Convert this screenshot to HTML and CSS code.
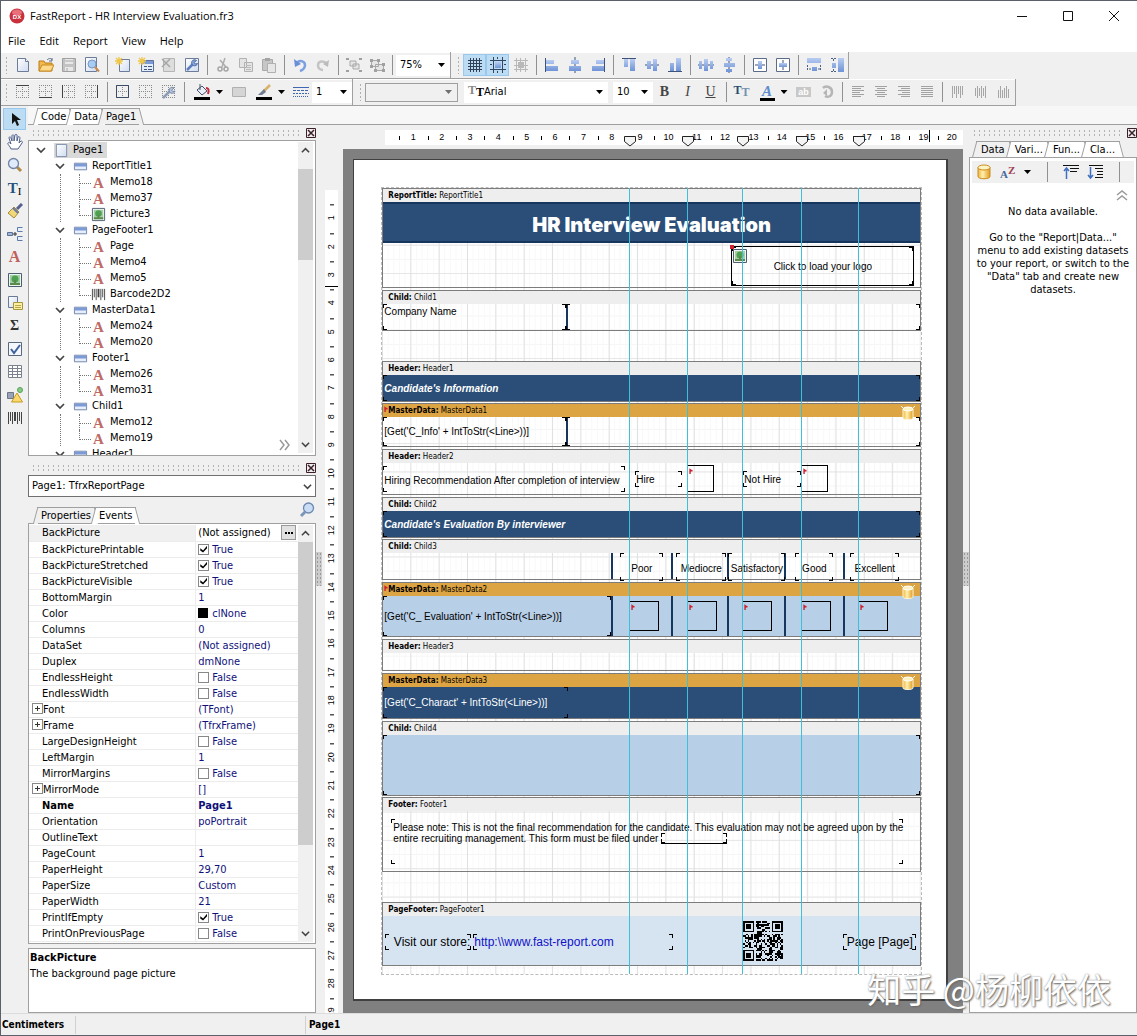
FILE: index.html
```html
<!DOCTYPE html>
<html lang="en">
<head>
  <meta charset="UTF-8">
  <meta name="viewport" content="width=device-width, initial-scale=1.0">
  <title>FastReport - HR Interview Evaluation.fr3</title>
  <link rel="stylesheet" href="styles.css">
</head>
<body>
  <!-- Icon set -->
  <svg class="sprite" aria-hidden="true">
    <defs>
      <linearGradient id="g-blue" x1="0" y1="0" x2="0" y2="1"><stop offset="0" stop-color="#b9cdf2"/><stop offset="1" stop-color="#6f93d6"/></linearGradient>
      <linearGradient id="g-paper" x1="0" y1="0" x2="1" y2="1"><stop offset="0" stop-color="#fff"/><stop offset="1" stop-color="#cfdcf0"/></linearGradient>
      <linearGradient id="g-gold" x1="0" y1="0" x2="1" y2="0"><stop offset="0" stop-color="#f0b63c"/><stop offset=".4" stop-color="#fff0b0"/><stop offset="1" stop-color="#e09a20"/></linearGradient>
    </defs>
    <symbol id="i-new" viewBox="0 0 16 16"><path d="M2.500 1.500h8l3 3v10h-11z" fill="url(#g-paper)" stroke="#6d7c99"/><path d="M10.500 1.500v3h3" fill="#fff" stroke="#6d7c99"/></symbol>
    <symbol id="i-open" viewBox="0 0 16 16"><path d="M1 14V4h5l1 2h7v8z" fill="#f3b94d" stroke="#b97a16"/><path d="M1 14l3-6h12l-3 6z" fill="#ffd98a" stroke="#c58a20"/><path d="M9 3c2-2 4-2 5 0m0-2v3h-3" fill="none" stroke="#5a6b8c"/></symbol>
    <symbol id="i-save" viewBox="0 0 16 16"><path d="M1.500 1.500h13v13h-13z" fill="#c3c3c3" stroke="#a0a0a0"/><path d="M4 2h8v5H4zM4 10h8v4H4z" fill="#e8e8e8"/><path d="M4 4h8M6 11v3" stroke="#a8a8a8"/></symbol>
    <symbol id="i-preview" viewBox="0 0 16 16"><path d="M1.500.5h11v14h-11z" fill="url(#g-paper)" stroke="#6d7c99"/><circle cx="8" cy="7" r="4" fill="#a9cdf2" stroke="#7898c4"/><path d="M11 10l4 4.500" stroke="#c98a4a" stroke-width="2"/></symbol>
    <symbol id="i-newpage" viewBox="0 0 16 16"><path d="M4.500 2.500h10v12h-10z" fill="url(#g-paper)" stroke="#6d7c99"/><path d="M4 0v8M0 4h8M1 1l6 6M7 1L1 7" stroke="#efc648" stroke-width="1.300"/></symbol>
    <symbol id="i-newdlg" viewBox="0 0 16 16"><path d="M3.500 3.500h12v11h-12z" fill="#e4edfa" stroke="#5d7199"/><path d="M4 4h11v3H4z" fill="#7b9bd8"/><path d="M6 9.500h3M6 12.500h3M10 9.500h4M10 12.500h4" stroke="#44567a"/><path d="M4 0v8M0 4h8M1 1l6 6M7 1L1 7" stroke="#efc648" stroke-width="1.300"/></symbol>
    <symbol id="i-delpage" viewBox="0 0 16 16"><path d="M2.500 1.500h11v13h-11z" fill="#ddd" stroke="#b4b4b4"/><path d="M1 2l8 8M9 2l-8 8" stroke="#a6a6a6" stroke-width="1.500"/></symbol>
    <symbol id="i-pageset" viewBox="0 0 16 16"><path d="M1.500 1.500h13v13h-13z" fill="url(#g-paper)" stroke="#6d7c99"/><path d="M3 13l6-6" stroke="#5d7fc0" stroke-width="2.500"/><path d="M12.500 3.500a3 3 0 1 0 1 3l-2 .5-1.500-1.500z" fill="#86a5dc" stroke="#4f6da8"/></symbol>
    <symbol id="i-cut" viewBox="0 0 16 16"><path d="M10 1L7 10M5 3l6 7" stroke="#adadad" stroke-width="1.500"/><circle cx="5" cy="12" r="2" fill="none" stroke="#a5a5a5" stroke-width="1.500"/><circle cx="11" cy="12" r="2" fill="none" stroke="#a5a5a5" stroke-width="1.500"/></symbol>
    <symbol id="i-copy" viewBox="0 0 16 16"><path d="M1.500 1.500h7v9h-7zM6.500 5.500h8v9h-8z" fill="#e4e4e4" stroke="#b2b2b2"/><path d="M8 8.500h5M8 10.500h5M8 12.500h5" stroke="#bbb"/></symbol>
    <symbol id="i-paste" viewBox="0 0 16 16"><path d="M1.500 2.500h10v11h-10z" fill="#c6c6c6" stroke="#a9a9a9"/><path d="M4 1h5v3H4z" fill="#a4a4a4"/><path d="M6.500 6.500h8v9h-8z" fill="#e6e6e6" stroke="#b0b0b0"/></symbol>
    <symbol id="i-undo" viewBox="0 0 16 16"><path d="M4 7c3-5 9-3 9 1 0 3-2 5-5 6" fill="none" stroke="#7b9fe0" stroke-width="2.500"/><path d="M2 2l1 8 6-3z" fill="#6a8fd8"/></symbol>
    <symbol id="i-redo" viewBox="0 0 16 16"><path d="M12 7C9 3 3 4 3 8c0 3 2 5 5 5" fill="none" stroke="#c4c4c4" stroke-width="2.500"/><path d="M14 3l-1 7-5-3z" fill="#bbb"/></symbol>
    <symbol id="i-group" viewBox="0 0 16 16"><path d="M4 4h6v5H4zM7 7h6v5H7z" fill="#e6e6e6" stroke="#a9a9a9"/><path d="M0 1h3v2H0zM13 1h3v2h-3zM0 13h3v2H0zM13 13h3v2h-3z" fill="#a0a0a0"/></symbol>
    <symbol id="i-ungroup" viewBox="0 0 16 16"><path d="M2.500 3.500h7v6h-7zM6.500 7.500h8v6h-8z" fill="#e6e6e6" stroke="#a9a9a9"/><path d="M1 2h3v3H1zM8 2h3v3H8zM13 6h3v3h-3zM5 12h3v3H5zM13 12h3v3h-3zM1 8h3v3H1z" fill="#a0a0a0"/></symbol>
    <symbol id="i-grid" viewBox="0 0 16 16"><path d="M3.500 1v14M6.500 1v14M9.500 1v14M12.500 1v14M1 3.500h14M1 6.500h14M1 9.500h14M1 12.500h14" stroke="#2f4058"/></symbol>
    <symbol id="i-snap" viewBox="0 0 16 16"><path d="M3.500 0v16M12.500 0v16M0 3.500h16M0 12.500h16M7.500 0v2M7.500 14v2M0 7.500h2M14 7.500h2" stroke="#34465f"/><path d="M5 5h6v6H5z" fill="url(#g-blue)"/></symbol>
    <symbol id="i-fitgrid" viewBox="0 0 16 16"><path d="M3.500 1v14M7.500 1v14M12.500 1v14M1 3.500h14M1 8.500h14M1 12.500h14" stroke="#b8b8b8"/><path d="M5 5h6v6H5z" fill="#b9b9b9"/></symbol>
    <symbol id="i-al" viewBox="0 0 16 16"><path d="M1.500 1v14" stroke="#3e5379"/><path d="M2 3h8v4H2zM2 9h12v5H2z" fill="url(#g-blue)"/></symbol>
    <symbol id="i-ac" viewBox="0 0 16 16"><path d="M8 0v16" stroke="#3e5379"/><path d="M4 3h8v4H4zM2 9h12v5H2z" fill="url(#g-blue)"/></symbol>
    <symbol id="i-ar" viewBox="0 0 16 16"><path d="M14.500 1v14" stroke="#3e5379"/><path d="M6 3h8v4H6zM2 9h12v5H2z" fill="url(#g-blue)"/></symbol>
    <symbol id="i-at" viewBox="0 0 16 16"><path d="M1 1.500h14" stroke="#3e5379"/><path d="M3 2h4v8H3zM9 2h5v12H9z" fill="url(#g-blue)"/></symbol>
    <symbol id="i-am" viewBox="0 0 16 16"><path d="M1 8h14" stroke="#3e5379"/><path d="M3 4h4v8H3zM9 2h4v12H9z" fill="url(#g-blue)"/></symbol>
    <symbol id="i-ab" viewBox="0 0 16 16"><path d="M1 14.500h14" stroke="#3e5379"/><path d="M3 6h4v8H3zM9 1h5v13H9z" fill="url(#g-blue)"/></symbol>
    <symbol id="i-sh" viewBox="0 0 16 16"><path d="M0 8h16" stroke="#3e5379"/><path d="M1 4h3v8H1zM6 2h4v12H6zM12 4h3v8h-3z" fill="url(#g-blue)"/></symbol>
    <symbol id="i-sv" viewBox="0 0 16 16"><path d="M8 0v16" stroke="#3e5379"/><path d="M5 1h6v3H5zM3 6h11v4H3zM5 12h6v3H5z" fill="url(#g-blue)"/></symbol>
    <symbol id="i-ch" viewBox="0 0 16 16"><path d="M1.500 1.500h13v13h-13z" fill="#fff" stroke="#5b6b88"/><path d="M3 8h10" stroke="#3e5379"/><path d="M6 4h4v8H6z" fill="url(#g-blue)"/></symbol>
    <symbol id="i-cv" viewBox="0 0 16 16"><path d="M1.500 1.500h13v13h-13z" fill="#fff" stroke="#5b6b88"/><path d="M8 3v10" stroke="#3e5379"/><path d="M4 6h8v4H4z" fill="url(#g-blue)"/></symbol>
    <symbol id="i-sw" viewBox="0 0 16 16"><path d="M1 1h14v5H1zM6 10h5v4H6z" fill="url(#g-blue)"/><path d="M1.500 8v6M14.500 8v6M3 12h2M12 12h2" stroke="#4e5f80" stroke-dasharray="2 1"/></symbol>
    <symbol id="i-sz" viewBox="0 0 16 16"><path d="M9 1h6v14H9zM3 6h4v5H3z" fill="url(#g-blue)"/><path d="M2 1.500h6M2 14.500h6M4.500 2v3M4.500 12v2" stroke="#4e5f80" stroke-dasharray="2 1"/></symbol>

    <symbol id="i-dots" viewBox="0 0 16 16"><path d="M1.500 1v14M7.500 1v14M13.500 1v14M1 1.500h14M1 7.500h14M1 13.500h14" stroke="#8a8a8a" stroke-dasharray="1 1"/></symbol>
    <symbol id="i-ft" viewBox="0 0 16 16"><use href="#i-dots"/><path d="M1 1.500h13" stroke="#444"/></symbol>
    <symbol id="i-fb" viewBox="0 0 16 16"><use href="#i-dots"/><path d="M1 13.500h13" stroke="#444"/></symbol>
    <symbol id="i-fl" viewBox="0 0 16 16"><use href="#i-dots"/><path d="M1.500 1v13" stroke="#444"/></symbol>
    <symbol id="i-fr" viewBox="0 0 16 16"><use href="#i-dots"/><path d="M13.500 1v13" stroke="#444"/></symbol>
    <symbol id="i-fa" viewBox="0 0 16 16"><use href="#i-dots"/><path d="M1.500 1.500h12v12h-12z" fill="none" stroke="#3d4c66"/></symbol>
    <symbol id="i-fe" viewBox="0 0 16 16"><use href="#i-dots"/><path d="M2 14l7-7" stroke="#8d9db8" stroke-width="2.500"/><path d="M13 4a3 3 0 1 0 1 3l-2 .5L10.500 6z" fill="#b7c5dc" stroke="#7385a6"/></symbol>
    <symbol id="i-fill" viewBox="0 0 16 16"><path d="M3 6l5-4 5 5-5 4z" fill="#e9eef7" stroke="#44506a"/><path d="M6 0v6" stroke="#44506a"/><path d="M12 4c3 0 3 3 2 6" stroke="#c8283c" stroke-width="2" fill="none"/><path d="M0 13h16v3H0z"/></symbol>
    <symbol id="i-fillset" viewBox="0 0 16 16"><path d="M1.500 3.500h13v9h-13z" fill="#d5d5d5" stroke="#b0b0b0"/></symbol>
    <symbol id="i-pen" viewBox="0 0 16 16"><path d="M14 1L8 7" stroke="#d9b26a" stroke-width="2.500"/><path d="M8 5l2 3-4 3-4 0z" fill="#6f7b8f"/><path d="M0 13h16v3H0z"/></symbol>
    <symbol id="i-lines" viewBox="0 0 16 16"><path d="M0 3.500h16" stroke="#3f66b0"/><path d="M0 6.500h16" stroke="#3f66b0" stroke-dasharray="3 1"/><path d="M0 9.500h16" stroke="#3f66b0" stroke-dasharray="2 1"/><path d="M0 12.500h16" stroke="#3f66b0" stroke-dasharray="1 1"/></symbol>
    <symbol id="i-rot" viewBox="0 0 16 16"><path d="M4 4c3-3 9-1 9 4 0 4-4 6-7 4" fill="none" stroke="#b5b5b5" stroke-width="2.500"/><path d="M8 5v7L4 9z" fill="#b5b5b5"/></symbol>
    <symbol id="i-tl" viewBox="0 0 16 16"><path d="M2 2.500h12M2 4.500h9M2 6.500h12M2 8.500h8M2 10.500h12M2 12.500h9" stroke="#a2a2a2"/></symbol>
    <symbol id="i-tc" viewBox="0 0 16 16"><path d="M2 2.500h12M4 4.500h8M2 6.500h12M4 8.500h8M2 10.500h12M4 12.500h8" stroke="#a2a2a2"/></symbol>
    <symbol id="i-tr" viewBox="0 0 16 16"><path d="M2 2.500h12M5 4.500h9M2 6.500h12M6 8.500h8M2 10.500h12M5 12.500h9" stroke="#a2a2a2"/></symbol>
    <symbol id="i-tj" viewBox="0 0 16 16"><path d="M2 2.500h12M2 4.500h12M2 6.500h12M2 8.500h12M2 10.500h12M2 12.500h12" stroke="#a2a2a2"/></symbol>
    <symbol id="i-vt" viewBox="0 0 16 16"><path d="M2.500 2v12M4.500 2v8M6.500 2v12M8.500 2v8M10.500 2v12M12.500 2v9" stroke="#a6a6a6"/></symbol>
    <symbol id="i-vm" viewBox="0 0 16 16"><path d="M2.500 4v8M4.500 2v12M6.500 4v8M8.500 2v12M10.500 4v8M12.500 2v12" stroke="#a6a6a6"/></symbol>
    <symbol id="i-vb" viewBox="0 0 16 16"><path d="M2.500 6v8M4.500 2v12M6.500 6v8M8.500 4v10M10.500 2v12M12.500 5v9" stroke="#a6a6a6"/></symbol>

    <symbol id="i-arrow" viewBox="0 0 16 16"><path d="M5 2v11l3-3 2 5 2-1-2-5h4z" fill="#111"/></symbol>
    <symbol id="i-hand" viewBox="0 0 16 16"><path d="M4 15c-1-3-4-5-3-6s2 0 3 1L2 4c0-2 2-1 2 0l1 3V2c0-2 2-1 2 0v5l1-6c0-1 2-1 2 0v6l1-4c1-1 2 0 2 1l-1 5 2-2c1 0 2 1 1 2l-4 6z" fill="#fff" stroke="#4e5f8c"/></symbol>
    <symbol id="i-lens" viewBox="0 0 16 16"><path d="M10 10l4 4" stroke="#b08a4a" stroke-width="3"/><circle cx="6.500" cy="6.500" r="5" fill="#dfeafa" stroke="#7083a4" stroke-width="1.300"/></symbol>
    <symbol id="i-find" viewBox="0 0 16 16"><path d="M6 10l-4 4" stroke="#7f95b8" stroke-width="3"/><circle cx="9.500" cy="6" r="5" fill="#c8dcf5" stroke="#6d87ae" stroke-width="1.300"/></symbol>
    <symbol id="i-brush" viewBox="0 0 16 16"><path d="M15 1l-5 5" stroke="#55618f" stroke-width="3"/><path d="M7 4l5 5-5 6-6-5z" fill="#f1d977" stroke="#a58a35"/><path d="M6 5l5 5" stroke="#6a78a8" stroke-width="2"/></symbol>
    <symbol id="i-bands" viewBox="0 0 16 16"><path d="M.5 6.500h5v3h-5z" fill="#9fb6dd" stroke="#5b7096"/><path d="M6 8h4M8 6v4" stroke="#333"/><path d="M15.500 1.500h-5v4h5M15.500 10.500h-5v4h5" fill="#e8f0fb" stroke="#5b7aa8"/></symbol>
    <symbol id="i-pic" viewBox="0 0 16 16"><path d="M1.500 1.500h13v13h-13z" fill="#eef5ee" stroke="#4d5e72"/><path d="M3 3h10v10H3z" fill="#a6cfa6"/><circle cx="8" cy="7" r="3.500" fill="#4ea052"/><path d="M3 11h10v2H3zM7 8h2v4H7z" fill="#5c8a4c"/></symbol>
    <symbol id="i-subrep" viewBox="0 0 16 16"><path d="M1.500 1.500h9v11h-9z" fill="url(#g-paper)" stroke="#6b7a94"/><path d="M6.500 7.500h9v7h-9z" fill="#fbf0a0" stroke="#a8973a"/><path d="M8 10.500h6M8 12.500h6" stroke="#b7a64c"/></symbol>
    <symbol id="i-check" viewBox="0 0 16 16"><path d="M1.500 1.500h13v13h-13z" fill="#f3f6fb" stroke="#5a6780"/><path d="M4 8l3 4 6-8" fill="none" stroke="#40609e" stroke-width="2"/></symbol>
    <symbol id="i-table" viewBox="0 0 16 16"><path d="M1.500 1.500h13v12h-13zM1.500 4.500h13M1.500 7.500h13M1.500 10.500h13M5.500 1.500v12M10.500 1.500v12" fill="#fff" stroke="#7a8290"/></symbol>
    <symbol id="i-shapes" viewBox="0 0 16 16"><path d="M.5 5.500h6v6h-6z" fill="#9aa4b8" stroke="#6c7688"/><circle cx="13" cy="3" r="2.500" fill="#85cc85" stroke="#5aa05a"/><path d="M10 6l5.500 9h-11z" fill="#fbd96a" stroke="#c79a25"/></symbol>
    <symbol id="i-bar" viewBox="0 0 16 16"><path d="M1.500 2v12M3.500 2v9M5.500 2v12M10.500 2v12M12.500 2v9M14.500 2v12" stroke="#444"/><path d="M8 2v9" stroke="#444" stroke-width="2"/></symbol>
    <symbol id="i-page" viewBox="0 0 16 16"><path d="M2.500 1.500h11v13h-11z" fill="url(#g-paper)" stroke="#7a89a5"/></symbol>
    <symbol id="i-band" viewBox="0 0 16 16"><path d="M1.500 4.500h13v7h-13z" fill="#e6eefb" stroke="#7083a8"/><path d="M2 5h12v3H2z" fill="#7b9ad6"/></symbol>
    <symbol id="i-db" viewBox="0 0 16 16"><path d="M2 3.500v9c0 3 12 3 12 0v-9z" fill="url(#g-gold)" stroke="#c98d20"/><ellipse cx="8" cy="3.500" rx="6" ry="2.500" fill="#fff3c4" stroke="#c98d20"/></symbol>
    <symbol id="i-dbw" viewBox="0 0 16 16"><path d="M3 4v9c0 2 10 2 10 0V4z" fill="url(#g-gold)" stroke="#fff6d8"/><ellipse cx="8" cy="4" rx="5" ry="2" fill="#fff3c4" stroke="#fff"/><path d="M1 1l2 2M15 1l-2 2" stroke="#fff"/></symbol>
    <symbol id="i-down" viewBox="0 0 10 10"><path d="M1 3l4 4 4-4" fill="none" stroke="#444" stroke-width="1.700"/></symbol>
    <symbol id="i-up" viewBox="0 0 10 10"><path d="M1 7l4-4 4 4" fill="none" stroke="#444" stroke-width="1.700"/></symbol>
    <symbol id="i-more" viewBox="0 0 12 12"><path d="M1 1l4 5-4 5M6 1l4 5-4 5" fill="none" stroke="#9a9a9a" stroke-width="1.500"/></symbol>
    <symbol id="i-close" viewBox="0 0 10 10"><path d="M.5.5h9v9h-9z" fill="#eee" stroke="#3c2028"/><path d="M2 2l6 6M8 2l-6 6" stroke="#3c2028" stroke-width="1.500"/></symbol>
    <symbol id="i-sortup" viewBox="0 0 16 16"><path d="M0 1.500h7M7 1.500h9M7 4.500h9M7 7.500h7" stroke="#111"/><path d="M3.500 15V4M1 7l2.500-3L6 7" fill="none" stroke="#3e6fc0" stroke-width="1.500"/></symbol>
    <symbol id="i-sortdown" viewBox="0 0 16 16"><path d="M2 1.500h14M8 4.500h8M10 7.500h6M10 10.500h6M8 13.500h8" stroke="#111"/><path d="M3.500 3v11M1 11l2.500 3L6 11" fill="none" stroke="#3e6fc0" stroke-width="1.500"/></symbol>
    <symbol id="i-pin" viewBox="0 0 12 11"><path d="M.5.500h11v5L6 10 .5 5.500z" fill="#f4f4f4" stroke="#222"/></symbol>
  </svg>

  <!-- Title bar -->
  <header class="titlebar">
    <svg class="app-logo" viewBox="0 0 16 16"><circle cx="8" cy="8" r="7.500" fill="#c9303e"/><ellipse cx="8" cy="4.500" rx="5" ry="3" fill="#e8707a"/><text x="8" y="11" class="app-logo-text">DX</text></svg>
    <h1>FastReport - HR Interview Evaluation.fr3</h1>
    <div class="window-buttons">
      <button aria-label="Minimize"><svg viewBox="0 0 10 10"><path d="M0 5.500h10" stroke="#111"/></svg></button>
      <button aria-label="Maximize"><svg viewBox="0 0 10 10"><path d="M.5.5h9v9h-9z" fill="none" stroke="#111"/></svg></button>
      <button aria-label="Close"><svg viewBox="0 0 10 10"><path d="M0 0l10 10M10 0L0 10" stroke="#111"/></svg></button>
    </div>
  </header>

  <nav class="menubar">
    <button>File</button><button>Edit</button><button>Report</button><button>View</button><button>Help</button>
  </nav>

  <!-- Toolbars -->
  <div class="toolbars">
    <div class="toolbar-row">
      <div class="toolbar">
        <i class="grip"></i>
        <button aria-label="New"><svg><use href="#i-new"/></svg></button>
        <button aria-label="Open"><svg><use href="#i-open"/></svg></button>
        <button aria-label="Save"><svg><use href="#i-save"/></svg></button>
        <button aria-label="Preview"><svg><use href="#i-preview"/></svg></button>
        <i class="sep"></i>
        <button aria-label="New page"><svg><use href="#i-newpage"/></svg></button>
        <button aria-label="New dialog"><svg><use href="#i-newdlg"/></svg></button>
        <button aria-label="Delete page"><svg><use href="#i-delpage"/></svg></button>
        <button aria-label="Page settings"><svg><use href="#i-pageset"/></svg></button>
        <i class="sep"></i>
        <button aria-label="Cut"><svg><use href="#i-cut"/></svg></button>
        <button aria-label="Copy"><svg><use href="#i-copy"/></svg></button>
        <button aria-label="Paste"><svg><use href="#i-paste"/></svg></button>
        <i class="sep"></i>
        <button aria-label="Undo"><svg><use href="#i-undo"/></svg></button>
        <button aria-label="Redo"><svg><use href="#i-redo"/></svg></button>
        <i class="sep"></i>
        <button aria-label="Group"><svg><use href="#i-group"/></svg></button>
        <button aria-label="Ungroup"><svg><use href="#i-ungroup"/></svg></button>
        <i class="sep"></i>
        <span class="combo combo-zoom"><select aria-label="Zoom"><option>75%</option></select></span>
      </div>
      <div class="toolbar">
        <i class="grip"></i>
        <button class="on" aria-label="Show grid"><svg><use href="#i-grid"/></svg></button>
        <button class="on" aria-label="Align to grid"><svg><use href="#i-snap"/></svg></button>
        <button aria-label="Fit to grid"><svg><use href="#i-fitgrid"/></svg></button>
        <i class="sep"></i>
        <button aria-label="Align left"><svg><use href="#i-al"/></svg></button>
        <button aria-label="Align centers"><svg><use href="#i-ac"/></svg></button>
        <button aria-label="Align right"><svg><use href="#i-ar"/></svg></button>
        <i class="sep"></i>
        <button aria-label="Align top"><svg><use href="#i-at"/></svg></button>
        <button aria-label="Align middles"><svg><use href="#i-am"/></svg></button>
        <button aria-label="Align bottom"><svg><use href="#i-ab"/></svg></button>
        <i class="sep"></i>
        <button aria-label="Space horizontally"><svg><use href="#i-sh"/></svg></button>
        <button aria-label="Space vertically"><svg><use href="#i-sv"/></svg></button>
        <i class="sep"></i>
        <button aria-label="Center horizontally"><svg><use href="#i-ch"/></svg></button>
        <button aria-label="Center vertically"><svg><use href="#i-cv"/></svg></button>
        <i class="sep"></i>
        <button aria-label="Same width"><svg><use href="#i-sw"/></svg></button>
        <button aria-label="Same height"><svg><use href="#i-sz"/></svg></button>
      </div>
    </div>
    <div class="toolbar-row">
      <div class="toolbar">
        <i class="grip"></i>
        <button aria-label="Top line"><svg><use href="#i-ft"/></svg></button>
        <button aria-label="Bottom line"><svg><use href="#i-fb"/></svg></button>
        <button aria-label="Left line"><svg><use href="#i-fl"/></svg></button>
        <button aria-label="Right line"><svg><use href="#i-fr"/></svg></button>
        <i class="sep"></i>
        <button aria-label="All lines"><svg><use href="#i-fa"/></svg></button>
        <button aria-label="No lines"><svg><use href="#i-dots"/></svg></button>
        <button aria-label="Edit frame"><svg><use href="#i-fe"/></svg></button>
        <i class="sep"></i>
        <button class="has-drop" aria-label="Background color"><svg><use href="#i-fill"/></svg><i class="drop"></i></button>
        <button aria-label="Fill editor"><svg><use href="#i-fillset"/></svg></button>
        <button class="has-drop" aria-label="Frame color"><svg><use href="#i-pen"/></svg><i class="drop"></i></button>
        <button aria-label="Frame style"><svg><use href="#i-lines"/></svg></button>
        <span class="combo combo-width"><select aria-label="Frame width"><option>1</option></select></span>
      </div>
      <div class="toolbar">
        <i class="grip"></i>
        <span class="combo combo-style"><select aria-label="Style"><option></option></select></span>
        <span class="combo combo-font"><b>T</b><b>T</b><select aria-label="Font name"><option>Arial</option></select></span>
        <span class="combo combo-size"><select aria-label="Font size"><option>10</option></select></span>
        <button class="glyph" aria-label="Bold"><b>B</b></button>
        <button class="glyph" aria-label="Italic"><em>I</em></button>
        <button class="glyph" aria-label="Underline"><u>U</u></button>
        <i class="sep"></i>
        <button class="glyph font-set" aria-label="Font settings"><b>T</b><b>T</b></button>
        <button class="glyph has-drop font-color" aria-label="Font color"><em>A</em><i class="drop"></i></button>
        <button class="glyph hilite" aria-label="Highlight"><span>ab</span></button>
        <button aria-label="Text rotation"><svg><use href="#i-rot"/></svg></button>
        <i class="sep"></i>
        <button aria-label="Text left"><svg><use href="#i-tl"/></svg></button>
        <button aria-label="Text center"><svg><use href="#i-tc"/></svg></button>
        <button aria-label="Text right"><svg><use href="#i-tr"/></svg></button>
        <button aria-label="Text justify"><svg><use href="#i-tj"/></svg></button>
        <i class="sep"></i>
        <button aria-label="Text top"><svg><use href="#i-vt"/></svg></button>
        <button aria-label="Text middle"><svg><use href="#i-vm"/></svg></button>
        <button aria-label="Text bottom"><svg><use href="#i-vb"/></svg></button>
      </div>
    </div>
  </div>

  <div class="workspace">
    <!-- Object tools -->
    <div class="tools">
      <button class="on" aria-label="Select"><svg><use href="#i-arrow"/></svg></button>
      <button aria-label="Hand"><svg><use href="#i-hand"/></svg></button>
      <button aria-label="Zoom"><svg><use href="#i-lens"/></svg></button>
      <button class="tool-text" aria-label="Edit text"><b>T</b><span>I</span></button>
      <button aria-label="Copy format"><svg><use href="#i-brush"/></svg></button>
      <button aria-label="Insert band"><svg><use href="#i-bands"/></svg></button>
      <button class="tool-memo" aria-label="Text object">A</button>
      <button aria-label="Picture"><svg><use href="#i-pic"/></svg></button>
      <button aria-label="Subreport"><svg><use href="#i-subrep"/></svg></button>
      <button class="tool-sum" aria-label="System text">Σ</button>
      <button aria-label="Check box"><svg><use href="#i-check"/></svg></button>
      <button aria-label="Table"><svg><use href="#i-table"/></svg></button>
      <button aria-label="Shapes"><svg><use href="#i-shapes"/></svg></button>
      <button aria-label="Barcode"><svg><use href="#i-bar"/></svg></button>
    </div>

    <div class="work-main">
      <div class="tabs page-tabs"><button>Code</button><button>Data</button><button class="active">Page1</button></div>

      <div class="panes">
        <aside class="left-pane">
          <div class="dock-head"><i></i><button aria-label="Close tree"><svg><use href="#i-close"/></svg></button></div>
          <div class="tree-box">
            <ul class="tree">
              <li><div class="node selected"><svg class="exp"><use href="#i-down"/></svg><svg class="ico"><use href="#i-page"/></svg><span>Page1</span></div>
                <ul>
                  <li><div class="node"><svg class="exp"><use href="#i-down"/></svg><svg class="ico"><use href="#i-band"/></svg><span>ReportTitle1</span></div>
                    <ul>
                      <li><div class="node"><i class="ico">A</i><span>Memo18</span></div></li>
                      <li><div class="node"><i class="ico">A</i><span>Memo37</span></div></li>
                      <li><div class="node"><svg class="ico"><use href="#i-pic"/></svg><span>Picture3</span></div></li>
                    </ul></li>
                  <li><div class="node"><svg class="exp"><use href="#i-down"/></svg><svg class="ico"><use href="#i-band"/></svg><span>PageFooter1</span></div>
                    <ul>
                      <li><div class="node"><i class="ico">A</i><span>Page</span></div></li>
                      <li><div class="node"><i class="ico">A</i><span>Memo4</span></div></li>
                      <li><div class="node"><i class="ico">A</i><span>Memo5</span></div></li>
                      <li><div class="node"><svg class="ico"><use href="#i-bar"/></svg><span>Barcode2D2</span></div></li>
                    </ul></li>
                  <li><div class="node"><svg class="exp"><use href="#i-down"/></svg><svg class="ico"><use href="#i-band"/></svg><span>MasterData1</span></div>
                    <ul>
                      <li><div class="node"><i class="ico">A</i><span>Memo24</span></div></li>
                      <li><div class="node"><i class="ico">A</i><span>Memo20</span></div></li>
                    </ul></li>
                  <li><div class="node"><svg class="exp"><use href="#i-down"/></svg><svg class="ico"><use href="#i-band"/></svg><span>Footer1</span></div>
                    <ul>
                      <li><div class="node"><i class="ico">A</i><span>Memo26</span></div></li>
                      <li><div class="node"><i class="ico">A</i><span>Memo31</span></div></li>
                    </ul></li>
                  <li><div class="node"><svg class="exp"><use href="#i-down"/></svg><svg class="ico"><use href="#i-band"/></svg><span>Child1</span></div>
                    <ul>
                      <li><div class="node"><i class="ico">A</i><span>Memo12</span></div></li>
                      <li><div class="node"><i class="ico">A</i><span>Memo19</span></div></li>
                    </ul></li>
                  <li><div class="node"><svg class="exp"><use href="#i-down"/></svg><svg class="ico"><use href="#i-band"/></svg><span>Header1</span></div></li>
                </ul></li>
            </ul>
            <svg class="tree-more"><use href="#i-more"/></svg>
            <div class="scroll scroll-tree"><svg><use href="#i-up"/></svg><i></i><svg><use href="#i-down"/></svg></div>
          </div>

          <div class="dock-head"><i></i><button aria-label="Close inspector"><svg><use href="#i-close"/></svg></button></div>
          <div class="object-pick"><select aria-label="Object"><option>Page1: TfrxReportPage</option></select><svg><use href="#i-down"/></svg></div>
          <div class="inspector-head">
            <div class="tabs"><button class="active">Properties</button><button>Events</button></div>
            <button class="find" aria-label="Find property"><svg><use href="#i-find"/></svg></button>
          </div>
          <div class="props-box">
            <table class="props">
              <tr class="current"><th>BackPicture</th><td>(Not assigned)<button aria-label="Edit"><i></i><i></i><i></i></button></td></tr>
              <tr><th>BackPicturePrintable</th><td><label><input type="checkbox" checked>True</label></td></tr>
              <tr><th>BackPictureStretched</th><td><label><input type="checkbox" checked>True</label></td></tr>
              <tr><th>BackPictureVisible</th><td><label><input type="checkbox" checked>True</label></td></tr>
              <tr><th>BottomMargin</th><td>1</td></tr>
              <tr><th>Color</th><td><i class="swatch"></i>clNone</td></tr>
              <tr><th>Columns</th><td>0</td></tr>
              <tr><th>DataSet</th><td>(Not assigned)</td></tr>
              <tr><th>Duplex</th><td>dmNone</td></tr>
              <tr><th>EndlessHeight</th><td><label><input type="checkbox">False</label></td></tr>
              <tr><th>EndlessWidth</th><td><label><input type="checkbox">False</label></td></tr>
              <tr class="group"><th>Font</th><td>(TFont)</td></tr>
              <tr class="group"><th>Frame</th><td>(TfrxFrame)</td></tr>
              <tr><th>LargeDesignHeight</th><td><label><input type="checkbox">False</label></td></tr>
              <tr><th>LeftMargin</th><td>1</td></tr>
              <tr><th>MirrorMargins</th><td><label><input type="checkbox">False</label></td></tr>
              <tr class="group"><th>MirrorMode</th><td>[]</td></tr>
              <tr class="strong"><th>Name</th><td>Page1</td></tr>
              <tr><th>Orientation</th><td>poPortrait</td></tr>
              <tr><th>OutlineText</th><td></td></tr>
              <tr><th>PageCount</th><td>1</td></tr>
              <tr><th>PaperHeight</th><td>29,70</td></tr>
              <tr><th>PaperSize</th><td>Custom</td></tr>
              <tr><th>PaperWidth</th><td>21</td></tr>
              <tr><th>PrintIfEmpty</th><td><label><input type="checkbox" checked>True</label></td></tr>
              <tr><th>PrintOnPreviousPage</th><td><label><input type="checkbox">False</label></td></tr>
            </table>
            <div class="scroll scroll-props"><svg><use href="#i-up"/></svg><i></i><svg><use href="#i-down"/></svg></div>
          </div>
          <div class="hint"><b>BackPicture</b><p>The background page picture</p></div>
        </aside>

        <i class="splitter"></i>

        <!-- Report page designer -->
        <main class="designer">
          <div class="ruler ruler-h" id="rulerH"></div>
          <div class="ruler ruler-v" id="rulerV"></div>
          <div class="canvas">
            <div class="paper">
              <div class="print-area">
                <section class="band report-title">
                  <h3><b>ReportTitle:</b> ReportTitle1</h3>
                  <div class="band-body">
                    <h2>HR Interview Evaluation</h2>
                    <div class="memo picture3"><svg><use href="#i-pic"/></svg>Click to load your logo</div>
                  </div>
                </section>
                <section class="band child1">
                  <h3><b>Child:</b> Child1</h3>
                  <div class="band-body">
                    <div class="memo half top-text">Company Name</div>
                    <div class="memo rest"></div>
                  </div>
                </section>
                <section class="band header1 navy">
                  <h3><b>Header:</b> Header1</h3>
                  <div class="band-body"><div class="memo full caption">Candidate's Information</div></div>
                </section>
                <section class="band data masterdata1">
                  <h3><b>MasterData:</b> MasterData1</h3><svg class="db"><use href="#i-dbw"/></svg>
                  <div class="band-body">
                    <div class="memo half">[Get('C_Info' + IntToStr(&lt;Line&gt;))]</div>
                    <div class="memo rest"></div>
                  </div>
                </section>
                <section class="band header2">
                  <h3><b>Header:</b> Header2</h3>
                  <div class="band-body">
                    <div class="memo hiring">Hiring Recommendation After completion of interview</div>
                    <div class="memo hire">Hire</div>
                    <i class="check check-hire"></i>
                    <div class="memo not-hire">Not Hire</div>
                    <i class="check check-not-hire"></i>
                  </div>
                </section>
                <section class="band child2 navy">
                  <h3><b>Child:</b> Child2</h3>
                  <div class="band-body"><div class="memo full caption">Candidate's Evaluation By interviewer</div></div>
                </section>
                <section class="band child3">
                  <h3><b>Child:</b> Child3</h3>
                  <div class="band-body">
                    <i class="rule rule1"></i><i class="rule rule2"></i><i class="rule rule3"></i><i class="rule rule4"></i><i class="rule rule5"></i>
                    <div class="memo mark poor">Poor</div>
                    <div class="memo mark mediocre">Mediocre</div>
                    <div class="memo mark satisfactory">Satisfactory</div>
                    <div class="memo mark good">Good</div>
                    <div class="memo mark excellent">Excellent</div>
                  </div>
                </section>
                <section class="band data masterdata2 sky">
                  <h3><b>MasterData:</b> MasterData2</h3><svg class="db"><use href="#i-dbw"/></svg>
                  <div class="band-body">
                    <div class="memo evaluation">[Get('C_ Evaluation' + IntToStr(&lt;Line&gt;))]</div>
                    <i class="rule rule2"></i><i class="rule rule3"></i><i class="rule rule4"></i><i class="rule rule5"></i>
                    <i class="check check1"></i><i class="check check2"></i><i class="check check3"></i><i class="check check4"></i><i class="check check5"></i>
                  </div>
                </section>
                <section class="band header3">
                  <h3><b>Header:</b> Header3</h3>
                  <div class="band-body"></div>
                </section>
                <section class="band data masterdata3 navy">
                  <h3><b>MasterData:</b> MasterData3</h3><svg class="db"><use href="#i-dbw"/></svg>
                  <div class="band-body"><div class="memo half plain">[Get('C_Charact' + IntToStr(&lt;Line&gt;))]</div></div>
                </section>
                <section class="band child4 sky">
                  <h3><b>Child:</b> Child4</h3>
                  <div class="band-body"><div class="memo full"></div></div>
                </section>
                <section class="band footer1">
                  <h3><b>Footer:</b> Footer1</h3>
                  <div class="band-body">
                    <div class="memo note">Please note: This is not the final recommendation for the candidate. This evaluation may not be agreed upon by the<br>entire recruiting management. This form must be filed under</div>
                    <div class="memo blank"></div>
                  </div>
                </section>
                <section class="band page-footer">
                  <h3><b>PageFooter:</b> PageFooter1</h3>
                  <div class="band-body">
                    <div class="memo store">Visit our store:</div>
                    <div class="memo url"><a href="#">http:\\www.fast-report.com</a></div>
                    <svg class="qr" id="qr" viewBox="0 0 25 25"></svg>
                    <div class="memo page-no">Page [Page]</div>
                  </div>
                </section>
                <i class="guide guide1"></i><i class="guide guide2"></i><i class="guide guide3"></i><i class="guide guide4"></i><i class="guide guide5"></i>
              </div>
            </div>
          </div>
        </main>

        <i class="splitter"></i>

        <aside class="right-pane">
          <div class="dock-head"><i></i><button aria-label="Close data"><svg><use href="#i-close"/></svg></button></div>
          <div class="tabs"><button class="active">Data</button><button>Vari...</button><button>Fun...</button><button>Cla...</button></div>
          <div class="data-box">
            <div class="data-tools">
              <button aria-label="Datasets"><svg><use href="#i-db"/></svg></button>
              <button class="sort" aria-label="Sort"><b>A</b><b>Z</b></button><i class="drop"></i>
              <i class="sep"></i>
              <button aria-label="Collapse"><svg><use href="#i-sortup"/></svg></button>
              <button aria-label="Expand"><svg><use href="#i-sortdown"/></svg></button>
              <i class="sep"></i>
            </div>
            <svg class="data-up"><use href="#i-more"/></svg>
            <p>No data available.</p>
            <p>Go to the "Report|Data..." menu to add existing datasets to your report, or switch to the "Data" tab and create new datasets.</p>
          </div>
        </aside>
      </div>
    </div>
  </div>

  <footer class="statusbar"><span>Centimeters</span><span></span><span>Page1</span></footer>

  <div class="watermark">知乎 @杨柳依依</div>

  <script src="script.js"></script>
</body>
</html>
```
FILE: styles.css
```css
:root {
  --cm: .75cm; /* one centimetre at 75% zoom */
  --face: #f0f0f0;
  --line: #a0a0a0;
  --navy: #2a4e78;
  --navy-dark: #17365d;
  --sky: #b8cfe8;
  --gold: #dda443;
  --ui: "DejaVu Sans Condensed", "DejaVu Sans", sans-serif;
  --title: "Open Sans", "Noto Sans", sans-serif;
  --memo: "Liberation Sans", Arial, sans-serif;
  --serif: "Liberation Serif", serif;
}

* {
  box-sizing: border-box;
}

body {
  margin: 0;
  height: 100vh;
  display: flex;
  flex-direction: column;
  overflow: hidden;
  background: var(--face);
  border: 1px solid #5a5f6a;
  border-right: 0;
  color: #000;
  font: 11px/16px var(--ui);
}

h1, h2, h3, p, ul {
  margin: 0;
  padding: 0;
  font-weight: normal;
}

button {
  margin: 0;
  padding: 0;
  border: 0;
  background: none;
  font: inherit;
  color: inherit;
}

select {
  appearance: none;
  width: 100%;
  border: 0;
  background: none;
  font: inherit;
  color: inherit;
  padding: 0;
}

svg {
  display: block;
  width: 16px;
  height: 16px;
  flex: none;
}

.sprite {
  position: absolute;
  width: 0;
  height: 0;
}

/* Title bar and menu */
.titlebar {
  display: flex;
  align-items: center;
  height: 29px;
  flex: none;
  background: #fff;
  padding-left: 8px;
}

.app-logo-text {
  font: bold 6px var(--memo);
  fill: #fff;
  text-anchor: middle;
}

.titlebar h1 {
  flex: 1;
  padding-left: 5px;
  font: 11px/16px var(--title);
}

.window-buttons {
  display: flex;
}

.window-buttons button {
  width: 46px;
  height: 29px;
  display: flex;
  align-items: center;
  justify-content: center;
}

.window-buttons svg {
  width: 10px;
  height: 10px;
}

.menubar {
  display: flex;
  flex: none;
  height: 22px;
  background: #fff;
  font: 11px/22px var(--title);
}

.menubar button {
  padding: 0 7px;
}

/* Toolbars */
.toolbars {
  flex: none;
}

.toolbar-row {
  display: flex;
  height: 27px;
}

.toolbar {
  display: flex;
  align-items: center;
  border: 1px solid var(--line);
  border-width: 0 1px 1px 0;
  box-shadow: inset 0 1px #fff;
}

.toolbar .grip {
  width: 3px;
  height: 18px;
  margin: 0 3px 0 4px;
  background: radial-gradient(circle, #b0b0b0 1px, transparent 1px) 0 0 / 3px 4px;
}

.toolbar + .toolbar .grip {
  margin-left: 6px;
}

.toolbar button {
  width: 23px;
  height: 22px;
  display: flex;
  align-items: center;
  justify-content: center;
}

.toolbar .on,
.tools .on {
  background: #bcdcf4;
  border: 1px solid #98c8ee;
}

.toolbar .has-drop {
  width: 39px;
  gap: 6px;
  padding-left: 2px;
}

.sep {
  flex: none;
  width: 1px;
  height: 20px;
  margin: 0 3px 0 4px;
  background: #909090;
}

.drop {
  width: 7px;
  height: 4px;
  background: #000;
  clip-path: polygon(0 0, 100% 0, 50% 100%);
}

.combo {
  display: flex;
  align-items: center;
  height: 21px;
  background: #fff;
  padding: 0 5px 0 4px;
}

.combo::after {
  content: "";
  flex: none;
  width: 7px;
  height: 4px;
  background: #000;
  clip-path: polygon(0 0, 100% 0, 50% 100%);
}

.combo-zoom { width: 54px; }
.combo-width { width: 40px; }
.combo-size { width: 40px; margin-left: 5px; }

.combo-style {
  width: 93px;
  height: 19px;
  background: var(--face);
  border: 1px solid var(--line);
}

.combo-style::after {
  background: #707070;
}

.combo-font {
  width: 144px;
  margin-left: 6px;
}

.combo-font b {
  font: bold 12px/14px var(--serif);
}

.combo-font b:first-child {
  padding-bottom: 4px;
  color: #888;
}

.combo-font select {
  flex: 1;
  width: auto;
}

.glyph {
  font: 14px/18px var(--serif);
  color: #444;
}

.font-set b {
  font-size: 12px;
  color: #7590b0;
}

.font-set b:first-child {
  color: #2a4a70;
  padding-bottom: 4px;
}

.font-color em {
  width: 15px;
  font: italic bold 15px/14px var(--serif);
  color: #5f8ccc;
  border-bottom: 3px solid #000;
}

.hilite span {
  background: #c8c8c8;
  color: #fff;
  font: bold 9px/10px var(--memo);
  padding: 0 2px;
}

/* Workspace */
.workspace {
  flex: 1;
  display: flex;
  min-height: 0;
}

.tools {
  width: 27px;
  flex: none;
  display: flex;
  flex-direction: column;
  gap: 1px;
  padding: 2px 0 0 2px;
}

.tools button {
  width: 23px;
  height: 22px;
  display: flex;
  align-items: center;
  justify-content: center;
}

.tool-text b {
  font: bold 15px/18px var(--serif);
  color: #28527c;
}

.tool-text span {
  font: 11px/12px var(--serif);
  padding-top: 6px;
}

.tool-memo {
  font: bold 16px/18px var(--serif);
  color: #c0605c;
}

.tool-sum {
  font: bold 14px/18px var(--serif);
  color: #333;
}

.work-main {
  flex: 1;
  display: flex;
  flex-direction: column;
  min-width: 0;
}

.tabs {
  display: flex;
  align-items: flex-end;
}

.tabs button {
  position: relative;
  height: 16px;
  padding: 0 4px;
  border-top: 1px solid var(--line);
  background: #fff;
  line-height: 16px;
}

/* slanted tab sides */
.tabs button::before,
.tabs button::after {
  content: "";
  position: absolute;
  top: 0;
  width: 4px;
  height: 16px;
  background: inherit;
}

.tabs button::before {
  left: -2px;
  border-left: 1px solid var(--line);
  transform: skewX(-15deg);
}

.tabs button::after {
  right: -2px;
  border-right: 1px solid var(--line);
  transform: skewX(15deg);
}

.tabs .active {
  background: var(--face);
}

.page-tabs {
  height: 19px;
  flex: none;
  padding-left: 9px;
  border-bottom: 1px solid var(--line);
  background: #f7f7f7;
}

.panes {
  flex: 1;
  display: flex;
  min-height: 0;
}

.left-pane {
  width: 288px;
  flex: none;
  display: flex;
  flex-direction: column;
}

.dock-head {
  display: flex;
  align-items: center;
  flex: none;
  height: 15px;
  gap: 4px;
  padding-left: 3px;
}

.dock-head i {
  flex: 1;
  height: 8px;
  background: radial-gradient(circle, #b4b4b4 1px, transparent 1px) 0 0 / 5px 4px;
}

.dock-head svg {
  width: 10px;
  height: 10px;
}

/* Report tree */
.tree-box {
  position: relative;
  display: flex;
  flex: none;
  height: 316px;
  overflow: hidden;
  border: 1px solid var(--line);
  background: #fff;
  padding: 1px 2px 2px 0;
  margin-bottom: 4px;
}

.tree {
  flex: 1;
  padding-left: 7px;
}

.tree, .tree ul {
  list-style: none;
}

.tree ul {
  padding-left: 19px;
}

.tree ul ul {
  margin-left: 5px;
  padding-left: 14px;
  border-left: 1px dotted #777;
}

.tree ul ul li {
  margin-left: 4px;
  border-left: 1px dotted #777;
}

.tree ul ul li:last-child {
  border-left-color: transparent;
}

.node {
  display: flex;
  align-items: center;
  height: 16px;
}

/* branch line from the parent to a leaf */
.tree ul ul .node::before {
  content: "";
  align-self: flex-start;
  width: 11px;
  height: 9px;
  margin-left: -1px;
  border: dotted #777;
  border-width: 0 0 1px 1px;
}

.node .exp {
  width: 10px;
  height: 10px;
  margin-right: 8px;
}

.node .ico {
  width: 15px;
  height: 15px;
  flex: none;
  font: bold 15px/16px var(--serif);
  color: #bd6a66;
  text-align: center;
}

.node span {
  padding: 0 4px;
}

.selected .ico,
.selected span {
  background-color: #d9d9d9;
}

.tree-more {
  position: absolute;
  right: 24px;
  bottom: 4px;
  width: 12px;
  height: 12px;
}

.scroll {
  flex: none;
  width: 15px;
  background: var(--face);
  display: flex;
  flex-direction: column;
  align-items: center;
  padding: 4px 0;
}

.scroll svg {
  width: 9px;
  height: 9px;
}

.scroll i {
  width: 15px;
  background: #cdcdcd;
}

.scroll svg:last-child {
  margin-top: auto;
}

.scroll-tree i {
  height: 30%;
  margin-top: 14px;
}

.scroll-props i {
  height: 74%;
  margin-top: 4px;
}

/* Object inspector */
.object-pick {
  display: flex;
  align-items: center;
  flex: none;
  height: 22px;
  border: 1px solid #707070;
  background: #fff;
  padding: 0 3px;
}

.object-pick svg {
  width: 9px;
  height: 9px;
}

.inspector-head {
  display: flex;
  flex: none;
  align-items: flex-end;
  justify-content: space-between;
  height: 26px;
  padding: 0 1px 0 9px;
}

.find {
  align-self: center;
}

.props-box {
  display: flex;
  flex: 1;
  min-height: 0;
  overflow: hidden;
  border: 1px solid var(--line);
  background: #fff;
  padding: 1px 2px 1px 0;
  margin-bottom: 4px;
}

.props {
  flex: 1;
  border-collapse: collapse;
  table-layout: fixed;
  width: 100%;
  align-self: flex-start;
}

.props th,
.props td {
  height: 16px;
  padding: 0;
  border-bottom: 1px solid #ececec;
  font-weight: normal;
  line-height: 15px;
  text-align: left;
  white-space: nowrap;
}

.props th {
  width: 62%;
  padding-left: 13px;
  border-right: 1px solid #ececec;
}

.props td {
  padding-left: 2px;
  color: #10107a;
}

.current th {
  background: var(--face);
}

.props .current td {
  color: #000;
}

.current button {
  float: right;
  display: flex;
  align-items: center;
  justify-content: center;
  gap: 1px;
  width: 15px;
  height: 15px;
  margin-right: 2px;
  border: 1px solid #999;
  background: #e1e1e1;
}

.current button i {
  width: 2px;
  height: 2px;
  background: #000;
}

.props .strong th,
.props .strong td {
  font-weight: bold;
}

.props .group th {
  padding-left: 3px;
}

.group th::before {
  content: "";
  display: inline-block;
  width: 9px;
  height: 9px;
  vertical-align: -1px;
  border: 1px solid #888;
  background:
    linear-gradient(#333, #333) center / 5px 1px no-repeat,
    linear-gradient(#333, #333) center / 1px 5px no-repeat;
}

.props label {
  display: flex;
  align-items: center;
}

.props input {
  appearance: none;
  width: 11px;
  height: 11px;
  margin: 0 3px 0 0;
  border: 1px solid #888;
  background: #fff;
}

.props input:checked::before {
  content: "";
  display: block;
  width: 7px;
  height: 7px;
  margin: 1px;
  background: #000;
  clip-path: polygon(0 40%, 40% 70%, 100% 0, 100% 35%, 40% 100%, 0 70%);
}

.swatch {
  display: inline-block;
  width: 10px;
  height: 10px;
  margin-right: 4px;
  vertical-align: -1px;
  background: #000;
}

.hint {
  flex: none;
  height: 65px;
  border: 1px solid var(--line);
  background: #fff;
  padding: 1px;
}

.splitter {
  flex: none;
  width: 6px;
  align-self: center;
  height: 34px;
  background: radial-gradient(circle, #999 1px, #ccc 1px) 0 0 / 3px 4px;
}

/* Designer */
.designer {
  flex: 1;
  min-width: 0;
  display: grid;
  grid-template: 24px 1fr / 21px 1fr;
  overflow: hidden;
}

.ruler {
  position: relative;
  display: flex;
  background: #fff;
  overflow: hidden;
  font: 9px/14px var(--memo);
}

.ruler span {
  position: relative;
  flex: none;
  text-align: center;
}

.ruler span::before {
  content: "";
  position: absolute;
  background: #000;
}

.ruler-h {
  grid-column: 2;
  height: 15px;
  margin: 5px 1px 0 42px;
  padding-left: calc(var(--cm) / 2);
  overflow: visible;
}

.ruler-h span {
  width: var(--cm);
}

.ruler-h span::before {
  left: 0;
  top: 6px;
  width: 1px;
  height: 4px;
}

.ruler-h svg {
  position: absolute;
  top: 6px;
  width: 12px;
  height: 11px;
}

.ruler-v {
  grid-row: 2;
  flex-direction: column;
  width: 13px;
  margin: 41px 0 0 3px;
  padding-top: calc(var(--cm) / 2);
}

.ruler-v span {
  height: var(--cm);
  line-height: 13px;
  writing-mode: vertical-rl;
  transform: rotate(180deg);
}

.ruler-v span::before {
  left: 4px;
  bottom: 0;
  width: 4px;
  height: 1px;
}

/* pointer position on the rulers */
.ruler-h::after,
.ruler-v::after {
  content: "";
  position: absolute;
  background: #000;
}

.ruler-h::after {
  left: 544px;
  top: 0;
  width: 1px;
  height: 12px;
}

.ruler-v::after {
  left: 0;
  top: 96px;
  width: 13px;
  height: 1px;
}

.canvas {
  grid-area: 2 / 2;
  background: #808080;
  padding: 10px;
  overflow: hidden;
}

.paper {
  width: calc(21 * var(--cm));
  height: calc(29.7 * var(--cm));
  padding: var(--cm);
  background: #fff;
  border: 1px solid #404040;
  border-width: 1px 2px 2px 1px;
}

.print-area {
  position: relative;
  height: calc(27.7 * var(--cm));
  width: calc(19 * var(--cm));
  outline: 1px dashed #bbb;
  background:
    linear-gradient(90deg, #e0e0e0 1px, transparent 1px) 0 0 / var(--cm) var(--cm),
    linear-gradient(#e6e6e6 1px, transparent 1px) 0 0 / var(--cm) var(--cm),
    linear-gradient(90deg, #f8f8f8 1px, transparent 1px) 0 0 / calc(var(--cm) / 5) calc(var(--cm) / 2),
    linear-gradient(#f4f4f4 1px, transparent 1px) 0 0 / var(--cm) calc(var(--cm) / 2);
}

.band {
  position: relative;
  display: flex;
  flex-direction: column;
  margin-bottom: 2px;
  border: 1px solid #7c7c7c;
}

.band h3 {
  height: 13px;
  flex: none;
  background: #eee;
  padding-left: 5px;
  font: 8px/13px var(--ui);
}

.band-body {
  position: relative;
  flex: 1;
}

.band.data h3 {
  background: var(--gold);
}

.data h3::before,
.check::before {
  content: "";
  position: absolute;
  left: 1px;
  top: 2px;
  width: 4px;
  height: 6px;
  background: #d02030;
  clip-path: polygon(0 0, 100% 45%, 35% 55%, 35% 100%, 0 100%);
}

.masterdata3 h3::before {
  display: none;
}

.db {
  position: absolute;
  z-index: 1;
  right: 4px;
  top: 1px;
}

.navy .band-body { background: var(--navy); color: #fff; }
.sky .band-body { background: var(--sky); }

.report-title { height: 100px; }
.child1 { height: 41px; margin-bottom: 30px; }
.header1 { height: 41px; margin-bottom: 1px; }
.masterdata1 { height: 44px; }
.header2 { height: 46px; }
.child2 { height: 41px; margin-bottom: 1px; }
.child3 { height: 41px; }
.masterdata2 { height: 55px; }
.header3 { height: 32px; }
.masterdata3 { height: 46px; }
.child4 { height: 75px; margin-bottom: 1px; }
.footer1 { height: 75px; margin-bottom: 30px; }
.page-footer { height: 64px; }

.page-footer .band-body {
  background: #d6e4f2;
}

.report-title h2 {
  height: 41px;
  background: var(--navy);
  border: solid var(--navy-dark);
  border-width: 2px 0;
  color: #fff;
  font: 900 20px/43px Inter, sans-serif;
  text-align: center;
}

/* Objects on the report page, drawn with corner marks */
.memo {
  --ink: linear-gradient(#000, #000);
  position: absolute;
  display: flex;
  align-items: center;
  padding: 0 1px;
  font: 10px/11px var(--memo);
  white-space: nowrap;
  background:
    var(--ink) 0 0 / 4px 1px, var(--ink) 0 0 / 1px 4px,
    var(--ink) 100% 0 / 4px 1px, var(--ink) 100% 0 / 1px 4px,
    var(--ink) 0 100% / 4px 1px, var(--ink) 0 100% / 1px 4px,
    var(--ink) 100% 100% / 4px 1px, var(--ink) 100% 100% / 1px 4px;
  background-repeat: no-repeat;
}

.full { inset: 0; }
.half { left: 0; top: 0; bottom: 0; width: 185px; border-right: 2px solid var(--navy-dark); }
.rest { left: 183px; top: 0; bottom: 0; right: 0; }
.plain { border-right: 0; }

.top-text {
  align-items: flex-start;
  padding-top: 2px;
}

.caption {
  font-weight: bold;
  font-style: italic;
}

.picture3 {
  left: 348px;
  top: 44px;
  width: 183px;
  height: 40px;
  border: 1px solid #000;
  justify-content: center;
}

.picture3 svg {
  position: absolute;
  left: 0;
  top: 1px;
}

.picture3::before {
  content: "";
  position: absolute;
  left: -2px;
  top: -2px;
  width: 4px;
  height: 4px;
  background: #d02030;
}

.hiring { left: 0; top: 3px; width: 242px; height: 26px; padding-top: 3px; }
.hire { left: 252px; top: 8px; width: 47px; height: 16px; }
.not-hire { left: 360px; top: 8px; width: 58px; height: 16px; }

.check {
  position: absolute;
  width: 30px;
  height: 30px;
  top: 5px;
  border: 1px solid #000;
}

.check-hire, .check-not-hire { width: 27px; height: 27px; top: 2px; }
.check1 { left: 246px; }
.check2, .check-hire { left: 304px; }
.check3 { left: 359px; }
.check4, .check-not-hire { left: 418px; }
.check5 { left: 475px; }

.rule {
  position: absolute;
  top: 0;
  bottom: 0;
  width: 2px;
  background: var(--navy-dark);
}

.rule1 { left: 228px; }
.rule2 { left: 288px; }
.rule3 { left: 344px; }
.rule4 { left: 401px; }
.rule5 { left: 460px; }

.mark { top: 0; height: 28px; justify-content: center; padding-top: 2px; }
.poor { left: 237px; width: 43px; }
.mediocre { left: 293px; width: 50px; }
.satisfactory { left: 345px; width: 57px; }
.good { left: 412px; width: 38px; }
.excellent { left: 467px; width: 49px; }

.evaluation { left: 0; top: 0; bottom: 0; width: 230px; border-right: 2px solid var(--navy-dark); }

.note {
  left: 8px;
  top: 8px;
  width: 512px;
  height: 45px;
  align-items: flex-start;
  padding: 3px 2px 0;
}

.blank { left: 278px; top: 22px; width: 66px; height: 11px; border-bottom: 1px solid #000; }

.store, .url, .page-no {
  top: 18px;
  height: 16px;
  font-size: 12px;
}

.store { left: 2px; width: 86px; justify-content: flex-end; }
.url { left: 90px; width: 200px; }
.page-no { left: 460px; width: 73px; justify-content: center; }

.url a {
  color: #1010c8;
  text-decoration: none;
}

.qr {
  position: absolute;
  left: 360px;
  top: 5px;
  width: 40px;
  height: 40px;
}

.guide {
  position: absolute;
  top: 0;
  bottom: 0;
  width: 1px;
  background: #3fc0d8;
}

.guide1 { left: 247px; }
.guide2 { left: 305px; }
.guide3 { left: 360px; }
.guide4 { left: 419px; }
.guide5 { left: 476px; }

/* Data panel */
.right-pane {
  width: 168px;
  flex: none;
  display: flex;
  flex-direction: column;
}

.right-pane .tabs {
  padding-left: 7px;
  margin-top: 1px;
}

.right-pane .tabs button {
  flex: none;
  padding: 0 5px;
}

.data-box {
  position: relative;
  flex: 1;
  border: 1px solid var(--line);
  background: #fff;
  padding: 3px 2px;
  line-height: 13px;
  text-align: center;
}

.data-tools {
  display: flex;
  align-items: center;
  height: 22px;
  background: var(--face);
  padding-left: 4px;
  margin-bottom: 22px;
  gap: 8px;
}

.data-tools button {
  width: 16px;
}

.data-tools .sep {
  margin: 0 7px 0 8px;
}

.data-tools .sep:last-child {
  margin-right: 0;
}

.sort {
  display: flex;
}

.sort b {
  font: bold 11px/14px var(--serif);
  color: #44689e;
  padding-top: 4px;
}

.sort b:last-child {
  color: #a04050;
  padding: 0;
}

.data-box p {
  padding: 0 4px;
  margin-bottom: 13px;
}

.data-up {
  position: absolute;
  right: 8px;
  top: 31px;
  width: 12px;
  height: 12px;
  transform: rotate(-90deg);
}

/* Status bar */
.statusbar {
  display: flex;
  align-items: center;
  flex: none;
  height: 22px;
  border-top: 1px solid #dcdcdc;
  font-size: 10px;
  font-weight: bold;
}

.statusbar span {
  padding: 0 1px;
  line-height: 18px;
}

.statusbar span:nth-child(1) {
  width: 75px;
  border-right: 1px solid #d0d0d0;
}

.statusbar span:nth-child(2) {
  width: 230px;
  height: 18px;
  border-right: 1px solid #d0d0d0;
  margin-right: 2px;
}

.watermark {
  position: absolute;
  right: 26px;
  bottom: 25px;
  font: 34px/44px "Noto Sans CJK SC", sans-serif;
  color: #fff;
  text-shadow: 1px 1px 2px #666, 0 0 2px #999;
}
```
FILE: script.js
```js
// Rulers: one cell per centimetre, half-centimetre tick at the cell edge
function fillRuler(id, count) {
  const ruler = document.getElementById(id);
  for (let i = 1; i <= count; i++) {
    const cell = document.createElement('span');
    cell.textContent = i;
    ruler.appendChild(cell);
  }
}

fillRuler('rulerH', 20);
fillRuler('rulerV', 29);

// Guide markers on the top ruler
[239, 297, 352, 411, 468].forEach(x => {
  document.getElementById('rulerH').insertAdjacentHTML('beforeend',
    `<svg style="left:${x}px"><use href="#i-pin"/></svg>`);
});

// 2D barcode preview
const SIZE = 25;
let seed = 77;
function random() {
  seed = (seed * 1103515245 + 12345) % 2147483648;
  return seed / 2147483648;
}

function finder(x, y) {
  const ring = Math.max(Math.abs(x - 3), Math.abs(y - 3));
  return ring === 3 || ring <= 1;
}

let path = '';
for (let y = 0; y < SIZE; y++) {
  for (let x = 0; x < SIZE; x++) {
    let dark = random() > 0.48;
    if (x < 8 && y < 8) dark = finder(x, y);
    if (x > 16 && y < 8) dark = finder(x - 18, y);
    if (x < 8 && y > 16) dark = finder(x, y - 18);
    if (dark) path += `M${x} ${y}h1v1h-1z`;
  }
}
document.getElementById('qr').innerHTML = `<path d="${path}" shape-rendering="crispEdges"/>`;
```
